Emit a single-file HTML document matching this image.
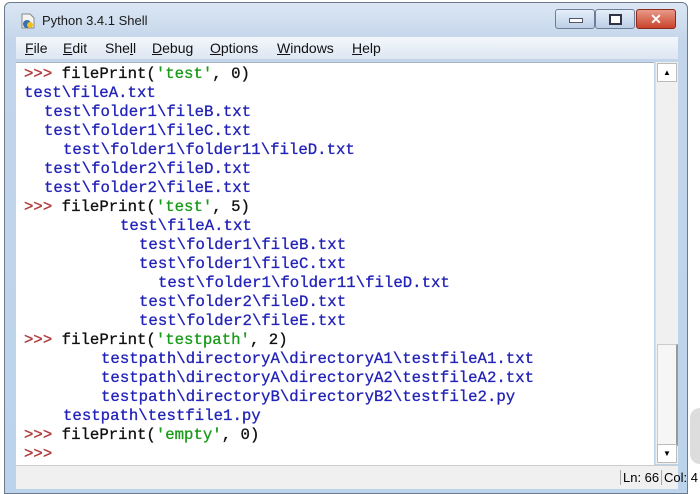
<!DOCTYPE html>
<html><head><style>
body{margin:0;width:700px;height:488px;background:#fff;position:relative;overflow:hidden;font-family:"Liberation Sans",sans-serif}
.win{position:absolute;left:4px;top:2px;width:682px;height:490px;border:1px solid #6b7a8c;border-radius:6px 6px 0 0;background:linear-gradient(#dbe6f3,#c3d5ea 40px,#bcd3ec);}
.title{position:absolute;left:42px;top:13px;font-size:13px;color:#1a1a1a}
.icon{position:absolute;left:20px;top:13px;width:16px;height:16px}
.menu{position:absolute;left:16px;top:37px;width:662px;height:22px;background:linear-gradient(#f4f7fc,#dde6f2);font-size:14px;color:#111}
.menu span{position:absolute;top:3px}
.text{position:absolute;left:16px;top:62px;width:638px;height:402px;background:#fff;border-top:1px solid #a9b4c2}
.sb{position:absolute;left:655px;top:62px;width:22px;height:402px;background:#f0f0f0;border-left:1px solid #ddd}
.line{position:absolute;font-family:"Liberation Mono",monospace;font-size:15.7px;white-space:pre;color:#2323b8;-webkit-text-stroke:0.3px}
.p{color:#b03a3a}.k{color:#111}.s{color:#1a9a1a}
.btn{position:absolute;top:9px;height:18px;border:1px solid #6d7f98;border-radius:3px;background:linear-gradient(#e5eef9,#bccfe6)}
.status{position:absolute;left:16px;top:465px;width:662px;height:23px;background:#f0f0f0;border-top:1px solid #ccc;font-size:13px}
</style></head><body>
<div class="win">
</div>
<svg class="icon" viewBox="0 0 16 16"><path d="M2 1h8l4 4v10H2z" fill="#f4f4f4" stroke="#888"/><circle cx="7" cy="11" r="4" fill="#3a6fb0"/><circle cx="10" cy="12" r="3" fill="#f0c020"/></svg>
<div class="title">Python 3.4.1 Shell</div>
<div class="btn" style="left:555px;width:38px"><div style="position:absolute;left:13px;top:8px;width:12px;height:3px;background:#fff;border:1px solid #556"></div></div>
<div class="btn" style="left:595px;width:38px"><div style="position:absolute;left:13px;top:4px;width:9px;height:7px;border:2px solid #334;background:#fff"></div></div>
<div class="btn" style="left:636px;width:38px;background:linear-gradient(#e89a88,#c9432c);border-color:#8a2a1a;color:#fff;font-weight:bold;text-align:center;font-size:14px;line-height:18px">✕</div>
<div class="menu">
<span style="left:9px"><u>F</u>ile</span><span style="left:47px"><u>E</u>dit</span><span style="left:89px">She<u>l</u>l</span><span style="left:136px"><u>D</u>ebug</span><span style="left:194px"><u>O</u>ptions</span><span style="left:261px"><u>W</u>indows</span><span style="left:336px"><u>H</u>elp</span>
</div>
<div class="text"></div>
<div class="sb">
<div style="position:absolute;left:1px;top:1px;width:18px;height:17px;background:#fff;border:1px solid #bbb;font-size:8px;text-align:center;line-height:17px">▲</div>
<div style="position:absolute;left:1px;top:282px;width:18px;height:100px;background:#f6f6f6;border:1px solid #ccc;border-right:2px solid #999"></div>
<div style="position:absolute;left:1px;top:382px;width:18px;height:17px;background:#fff;border:1px solid #bbb;font-size:8px;text-align:center;line-height:17px">▼</div>
</div>
<div class="status"><span style="position:absolute;left:604px;top:4px;border-left:1px solid #aaa;padding-left:2px;white-space:nowrap">Ln: 66</span><span style="position:absolute;left:645px;top:4px;border-left:1px solid #aaa;padding-left:2px;white-space:nowrap">Col: 4</span></div>
<div style="position:absolute;left:690px;top:408px;width:20px;height:56px;border-radius:10px;background:#ddd"></div>
<div class="line" style="left:24px;top:65px"><span class="p">&gt;&gt;&gt;</span> <span class="k">filePrint(</span><span class="s">'test'</span><span class="k">, 0)</span></div>
<div class="line" style="left:24px;top:84px">test\fileA.txt</div>
<div class="line" style="left:44px;top:103px">test\folder1\fileB.txt</div>
<div class="line" style="left:44px;top:122px">test\folder1\fileC.txt</div>
<div class="line" style="left:63px;top:141px">test\folder1\folder11\fileD.txt</div>
<div class="line" style="left:44px;top:160px">test\folder2\fileD.txt</div>
<div class="line" style="left:44px;top:179px">test\folder2\fileE.txt</div>
<div class="line" style="left:24px;top:198px"><span class="p">&gt;&gt;&gt;</span> <span class="k">filePrint(</span><span class="s">'test'</span><span class="k">, 5)</span></div>
<div class="line" style="left:120px;top:217px">test\fileA.txt</div>
<div class="line" style="left:139px;top:236px">test\folder1\fileB.txt</div>
<div class="line" style="left:139px;top:255px">test\folder1\fileC.txt</div>
<div class="line" style="left:158px;top:274px">test\folder1\folder11\fileD.txt</div>
<div class="line" style="left:139px;top:293px">test\folder2\fileD.txt</div>
<div class="line" style="left:139px;top:312px">test\folder2\fileE.txt</div>
<div class="line" style="left:24px;top:331px"><span class="p">&gt;&gt;&gt;</span> <span class="k">filePrint(</span><span class="s">'testpath'</span><span class="k">, 2)</span></div>
<div class="line" style="left:101px;top:350px">testpath\directoryA\directoryA1\testfileA1.txt</div>
<div class="line" style="left:101px;top:369px">testpath\directoryA\directoryA2\testfileA2.txt</div>
<div class="line" style="left:101px;top:388px">testpath\directoryB\directoryB2\testfile2.py</div>
<div class="line" style="left:63px;top:407px">testpath\testfile1.py</div>
<div class="line" style="left:24px;top:426px"><span class="p">&gt;&gt;&gt;</span> <span class="k">filePrint(</span><span class="s">'empty'</span><span class="k">, 0)</span></div>
<div class="line" style="left:24px;top:445px"><span class="p">&gt;&gt;&gt;</span></div>
</body></html>
